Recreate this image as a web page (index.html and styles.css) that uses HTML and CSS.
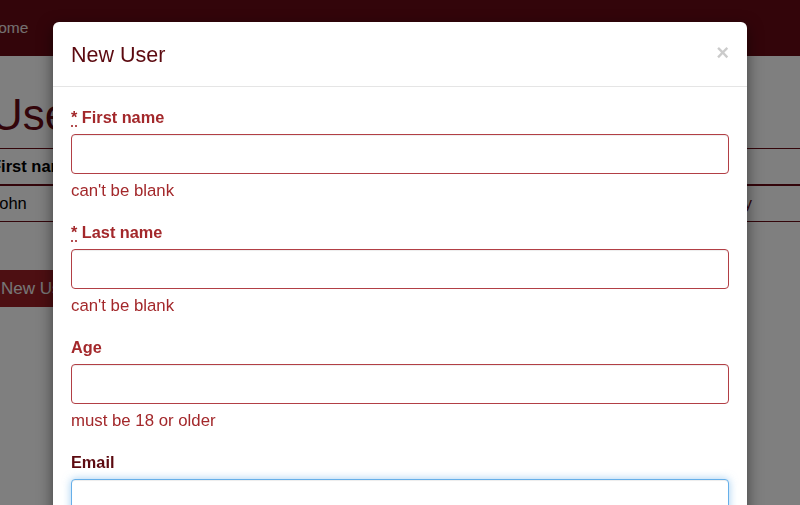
FILE: index.html
```html
<!DOCTYPE html>
<html lang="en">
<head>
<meta charset="utf-8">
<title>Users</title>
<link rel="stylesheet" href="styles.css">
</head>
<body>
<div class="page">
  <nav class="navbar"><a class="nav-link" href="#">Home</a></nav>
  <main class="container">
    <h1 class="page-title">Users</h1>
    <table class="users">
      <colgroup><col class="c1"><col class="c2"><col class="c3"><col class="c4"><col class="c5"><col class="c6"></colgroup>
      <thead>
        <tr><th>First name</th><th>Last name</th><th>Age</th><th>Email</th><th></th><th></th></tr>
      </thead>
      <tbody>
        <tr><td>John</td><td>Doe</td><td>30</td><td>john@example.com</td><td class="links"><a href="#">Show</a> <a href="#">Edit</a> <a href="#">Destroy</a></td><td></td></tr>
      </tbody>
    </table>
    <button class="btn-new" type="button">New User</button>
  </main>
</div>
<div class="backdrop"></div>
<div class="modal">
  <div class="modal-header">
    <h4 class="modal-title">New User</h4>
    <button class="close" type="button" aria-label="Close">×</button>
  </div>
  <form class="modal-body">
    <div class="form-group has-error">
      <label class="control-label" for="first"><abbr title="required">*</abbr> First name</label>
      <input class="form-control" id="first" type="text">
      <span class="help-block">can't be blank</span>
    </div>
    <div class="form-group has-error">
      <label class="control-label" for="last"><abbr title="required">*</abbr> Last name</label>
      <input class="form-control" id="last" type="text">
      <span class="help-block">can't be blank</span>
    </div>
    <div class="form-group has-error">
      <label class="control-label" for="age">Age</label>
      <input class="form-control" id="age" type="text">
      <span class="help-block">must be 18 or older</span>
    </div>
    <div class="form-group">
      <label class="control-label" for="email">Email</label>
      <input class="form-control focus" id="email" type="text">
    </div>
  </form>
</div>
</body>
</html>
```

FILE: styles.css
```css
html, body {
  margin: 0;
  height: 100%;
  overflow: hidden;
}
body {
  font-family: "Liberation Sans", Arial, sans-serif;
  font-size: 16px;
  color: #333;
  background: #fff;
}
.page {
  width: 800px;
}
.navbar {
  height: 56px;
  background: #660a14;
  display: flex;
  align-items: center;
}
.nav-link {
  margin-left: -13px;
  color: #e8e0e0;
  text-decoration: none;
  font-size: 15.5px;
  margin-top: -1px;
}
.container {
  margin-left: -9px;
  width: 840px;
}
.page-title {
  margin: 35px 0 9px;
  font-size: 44px;
  line-height: 48px;
  font-weight: normal;
  color: #660a14;
}
.users {
  width: 840px;
  table-layout: fixed;
  border-collapse: collapse;
  color: #000;
}
.c1 { width: 120px; }
.c2 { width: 120px; }
.c3 { width: 80px; }
.c4 { width: 240px; }
.c5 { width: 209px; }
.users th, .users td {
  padding: 8px 8px 8px 0;
  line-height: 19px;
  text-align: left;
  border-top: 1px solid #660a14;
  white-space: nowrap;
  overflow: hidden;
  font-size: 16.5px;
}
.users th {
  border-bottom: 2px solid #660a14;
}
.users td {
  border-bottom: 1px solid #660a14;
}
.users td.links {
  text-align: right;
}
.users a {
  color: #660a14;
  text-decoration: none;
}
.btn-new {
  margin-top: 48px;
  font-family: inherit;
  font-size: 17px;
  line-height: 21px;
  padding: 8px 12px 8px 10px;
  border: 0;
  border-radius: 4px;
  background: #9a1e24;
  color: #eee;
}
.backdrop {
  position: fixed;
  inset: 0;
  background: rgba(0, 0, 0, 0.5);
}
.modal {
  position: absolute;
  left: 53px;
  top: 22px;
  width: 694px;
  background: #fff;
  border-radius: 6px;
  box-shadow: 0 5px 15px rgba(0, 0, 0, 0.5);
}
.modal-header {
  display: flex;
  justify-content: space-between;
  align-items: center;
  padding: 16px 18px 14px;
  border-bottom: 1px solid #e5e5e5;
}
.modal-title {
  margin: 0;
  font-size: 21.5px;
  line-height: 34px;
  font-weight: normal;
  color: #5c0a10;
}
.close {
  padding: 0;
  margin: -4px 0 0;
  border: 0;
  background: none;
  font-family: inherit;
  font-size: 22px;
  font-weight: bold;
  line-height: 1;
  color: #000;
  opacity: 0.2;
}
.modal-body {
  display: block;
  padding: 19px 18px 20px;
}
.form-group {
  margin-bottom: 19px;
}
.control-label {
  display: block;
  font-weight: bold;
  font-size: 16.3px;
  line-height: 22px;
  margin-bottom: 6px;
  color: #5c0a10;
}
.control-label abbr {
  text-decoration: underline dotted;
  text-underline-offset: 3px;
  cursor: help;
}
.form-control {
  display: block;
  box-sizing: border-box;
  width: 100%;
  height: 40px;
  padding: 6px 12px;
  font-family: inherit;
  font-size: 16px;
  border: 1px solid #ccc;
  border-radius: 4px;
  background: #fff;
  box-shadow: inset 0 1px 1px rgba(0, 0, 0, 0.075);
  outline: none;
}
.has-error .control-label,
.has-error .help-block {
  color: #a3282b;
}
.has-error .form-control {
  border-color: #b23f45;
}
.form-control.focus {
  border-color: #66afe9;
  box-shadow: inset 0 1px 1px rgba(0, 0, 0, 0.075), 0 0 8px rgba(102, 175, 233, 0.6);
}
.help-block {
  display: block;
  margin-top: 6px;
  font-size: 16.8px;
  line-height: 22px;
}
```
